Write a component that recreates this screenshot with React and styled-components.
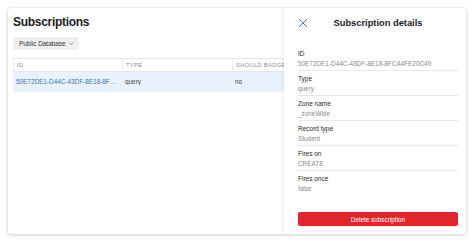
import React from "react";
import styled, { createGlobalStyle } from "styled-components";

const GlobalStyle = createGlobalStyle`
  html, body {
    margin: 0;
    padding: 0;
    background: #ffffff;
    font-family: "Liberation Sans", Arial, sans-serif;
    -webkit-font-smoothing: antialiased;
  }
`;

const Page = styled.div`
  width: 474px;
  height: 243px;
  padding: 8px 8px 9px 8px;
  box-sizing: border-box;
`;

const Window = styled.div`
  width: 458px;
  height: 226px;
  display: flex;
  background: #fff;
  border-radius: 2px;
  box-shadow: 0 0 1px rgba(0, 0, 0, 0.25), 0 1px 4px rgba(0, 0, 0, 0.18);
  overflow: hidden;
`;

const ListPane = styled.div`
  flex: 1;
  min-width: 0;
  padding: 7px 0 0 5px;
  overflow: hidden;
`;

const Title = styled.h1`
  margin: 0;
  font-size: 12px;
  line-height: 14px;
  font-weight: 700;
  letter-spacing: -0.3px;
  color: #1c1c1e;
`;

const DbButton = styled.button`
  margin-top: 8px;
  height: 13px;
  padding: 0 5px 0 6px;
  display: inline-flex;
  align-items: center;
  gap: 3px;
  border: none;
  border-radius: 2px;
  background: #efefef;
  font-family: inherit;
  font-size: 6.4px;
  color: #333;
`;

const Table = styled.div`
  margin-top: 8px;
  width: 340px;
`;

const Row = styled.div`
  display: grid;
  grid-template-columns: 109px 110px 121px;
  height: ${(p) => (p.$head ? "12px" : "19px")};
  align-items: center;
  background: ${(p) => (p.$selected ? "#e9f2fc" : "transparent")};
  border-top: ${(p) => (p.$head ? "1px solid #e6e6e6" : "none")};
  border-bottom: 1px solid ${(p) => (p.$head ? "#e6e6e6" : "#eef3f9")};
`;

const HeadCell = styled.div`
  height: 100%;
  display: flex;
  align-items: center;
  padding-left: 3px;
  border-left: 1px solid #ececec;
  font-size: 5.8px;
  letter-spacing: 0.3px;
  text-transform: uppercase;
  color: #8e8e93;
  white-space: nowrap;
  overflow: hidden;
`;

const Cell = styled.div`
  min-width: 0;
  padding: 0 4px 0 3px;
  font-size: 6.4px;
  color: ${(p) => (p.$link ? "#3a73b9" : "#444")};
  white-space: nowrap;
  overflow: hidden;
  text-overflow: ellipsis;
`;

const DetailsPanel = styled.aside`
  width: 182px;
  flex-shrink: 0;
  padding: 9px 8px 0 14px;
  box-sizing: border-box;
  background: #fff;
  box-shadow: -1px 0 3px rgba(0, 0, 0, 0.08);
  display: flex;
  flex-direction: column;
`;

const PanelHeader = styled.div`
  display: grid;
  grid-template-columns: 1fr auto 1fr;
  align-items: center;
  height: 11px;
`;

const CloseButton = styled.button`
  justify-self: start;
  border: none;
  background: none;
  padding: 0;
  width: 10px;
  height: 10px;
  display: flex;
  color: #4a7bc4;
`;

const PanelTitle = styled.h2`
  margin: 0;
  font-size: 9.3px;
  font-weight: 700;
  color: #1c1c1e;
  white-space: nowrap;
`;

const Fields = styled.div`
  margin-top: 18px;
`;

const Field = styled.div`
  padding: 3px 0 2px;
  border-bottom: ${(p) => (p.$last ? "none" : "1px solid #e8e8e8")};
`;

const Label = styled.div`
  font-size: 6.5px;
  line-height: 10px;
  color: #2a2a2a;
`;

const Value = styled.div`
  font-size: 6.4px;
  line-height: 9px;
  color: #8a8a8e;
`;

const DeleteButton = styled.button`
  margin-top: 17px;
  height: 14px;
  width: 100%;
  border: none;
  border-radius: 2px;
  background: #e0262c;
  color: #fff;
  font-family: inherit;
  font-size: 6.4px;
`;

const fields = [
  { label: "ID", value: "50E72DE1-D44C-43DF-8E18-8FCA4FE20C49" },
  { label: "Type", value: "query" },
  { label: "Zone name", value: "_zoneWide" },
  { label: "Record type", value: "Student" },
  { label: "Fires on", value: "CREATE" },
  { label: "Fires once", value: "false" },
];

export default function App() {
  return (
    <Page>
      <GlobalStyle />
      <Window>
        <ListPane>
          <Title>Subscriptions</Title>
          <DbButton>
            Public Database
            <svg width="5" height="3" viewBox="0 0 5 3" fill="none">
              <path d="M0.5 0.5 L2.5 2.5 L4.5 0.5" stroke="#666" strokeWidth="0.7" />
            </svg>
          </DbButton>
          <Table>
            <Row $head>
              <HeadCell>ID</HeadCell>
              <HeadCell>Type</HeadCell>
              <HeadCell>Should badge</HeadCell>
            </Row>
            <Row $selected>
              <Cell $link>50E72DE1-D44C-43DF-8E18-8FCA4FE20C49</Cell>
              <Cell>query</Cell>
              <Cell>no</Cell>
            </Row>
          </Table>
        </ListPane>
        <DetailsPanel>
          <PanelHeader>
            <CloseButton>
              <svg width="10" height="10" viewBox="0 0 10 10" fill="none">
                <path d="M1 1 L9 9 M9 1 L1 9" stroke="currentColor" strokeWidth="1" />
              </svg>
            </CloseButton>
            <PanelTitle>Subscription details</PanelTitle>
            <span />
          </PanelHeader>
          <Fields>
            {fields.map((f, i) => (
              <Field key={f.label} $last={i === fields.length - 1}>
                <Label>{f.label}</Label>
                <Value>{f.value}</Value>
              </Field>
            ))}
          </Fields>
          <DeleteButton>Delete subscription</DeleteButton>
        </DetailsPanel>
      </Window>
    </Page>
  );
}
